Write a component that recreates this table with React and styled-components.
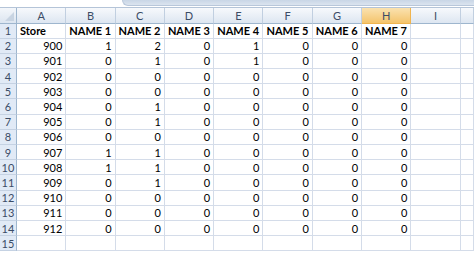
import { Fragment } from "react";
import styled, { createGlobalStyle } from "styled-components";

const GlobalStyle = createGlobalStyle`
  html, body {
    margin: 0;
    padding: 0;
    background: #ffffff;
  }
  body {
    font-family: Lato, "Open Sans", sans-serif;
    width: 474px;
    height: 253px;
    overflow: hidden;
  }
`;

const Sheet = styled.div`
  width: 474px;
  height: 253px;
  display: flex;
  flex-direction: column;
  overflow: hidden;
  background: #ffffff;
`;

const TopStrip = styled.div`
  height: 7px;
  display: flex;
  border-bottom: 1px solid #b4c4d8;
`;

const FormulaEdge = styled.div`
  margin-left: 122px;
  flex: 1;
  height: 5px;
  background: linear-gradient(#c9d6e6, #dbe4ef);
  border-bottom-left-radius: 6px;
  border-left: 1px solid #b8c7da;
  border-bottom: 1px solid #b8c7da;
`;

const Grid = styled.div`
  display: grid;
  grid-template-columns: 17px repeat(9, 49.3px) 1fr;
  grid-template-rows: 15.5px repeat(15, 15.2px);
`;

const Corner = styled.div`
  background: linear-gradient(#f4f7fb, #dce5f0);
  border-right: 1px solid #9eb6ce;
  border-bottom: 1px solid #9eb6ce;
  position: relative;
  &::after {
    content: "";
    position: absolute;
    right: 2px;
    bottom: 2px;
    border-left: 9px solid transparent;
    border-bottom: 9px solid #c8d4e2;
  }
`;

const ColHead = styled.div`
  display: flex;
  align-items: center;
  justify-content: center;
  font-size: 11px;
  color: #3b4c66;
  background: ${(p) =>
    p.$active
      ? "linear-gradient(#fae2b0, #f4c46c)"
      : "linear-gradient(#f7f9fc, #dde6f1)"};
  border-right: 1px solid ${(p) => (p.$active ? "#f0b44e" : "#c1cfe0")};
  border-bottom: 1px solid ${(p) => (p.$active ? "#f0b44e" : "#9eb6ce")};
`;

const RowHead = styled.div`
  display: flex;
  align-items: center;
  justify-content: center;
  font-size: 11px;
  color: #3b4c66;
  background: #e1eaf6;
  border-right: 1px solid #9eb6ce;
  border-bottom: 1px solid #c5d2e3;
`;

const Cell = styled.div`
  display: flex;
  align-items: center;
  justify-content: ${(p) => (p.$left ? "flex-start" : "flex-end")};
  padding: 0 3px;
  font-size: 11px;
  font-weight: ${(p) => (p.$bold ? 700 : 400)};
  color: #000000;
  white-space: nowrap;
  overflow: hidden;
  border-right: 1px solid #d4dce9;
  border-bottom: 1px solid #d4dce9;
`;

const letters = ["A", "B", "C", "D", "E", "F", "G", "H", "I", ""];
const headers = ["Store", "NAME 1", "NAME 2", "NAME 3", "NAME 4", "NAME 5", "NAME 6", "NAME 7"];

const data = [
  [900, 1, 2, 0, 1, 0, 0, 0],
  [901, 0, 1, 0, 1, 0, 0, 0],
  [902, 0, 0, 0, 0, 0, 0, 0],
  [903, 0, 0, 0, 0, 0, 0, 0],
  [904, 0, 1, 0, 0, 0, 0, 0],
  [905, 0, 1, 0, 0, 0, 0, 0],
  [906, 0, 0, 0, 0, 0, 0, 0],
  [907, 1, 1, 0, 0, 0, 0, 0],
  [908, 1, 1, 0, 0, 0, 0, 0],
  [909, 0, 1, 0, 0, 0, 0, 0],
  [910, 0, 0, 0, 0, 0, 0, 0],
  [911, 0, 0, 0, 0, 0, 0, 0],
  [912, 0, 0, 0, 0, 0, 0, 0],
];

const padRow = (cells) => [...cells, ...Array(10 - cells.length).fill("")];

export default function App() {
  const rows = [
    { cells: padRow(headers), head: true },
    ...data.map((r) => ({ cells: padRow(r) })),
    { cells: padRow([]) },
  ];

  return (
    <Sheet>
      <GlobalStyle />
      <TopStrip>
        <FormulaEdge />
      </TopStrip>
      <Grid>
        <Corner />
        {letters.map((l, i) => (
          <ColHead key={i} $active={l === "H"}>
            {l}
          </ColHead>
        ))}
        {rows.map((row, r) => (
          <Fragment key={r}>
            <RowHead>{r + 1}</RowHead>
            {row.cells.map((v, c) => (
              <Cell key={c} $bold={row.head} $left={row.head}>
                {v}
              </Cell>
            ))}
          </Fragment>
        ))}
      </Grid>
    </Sheet>
  );
}
